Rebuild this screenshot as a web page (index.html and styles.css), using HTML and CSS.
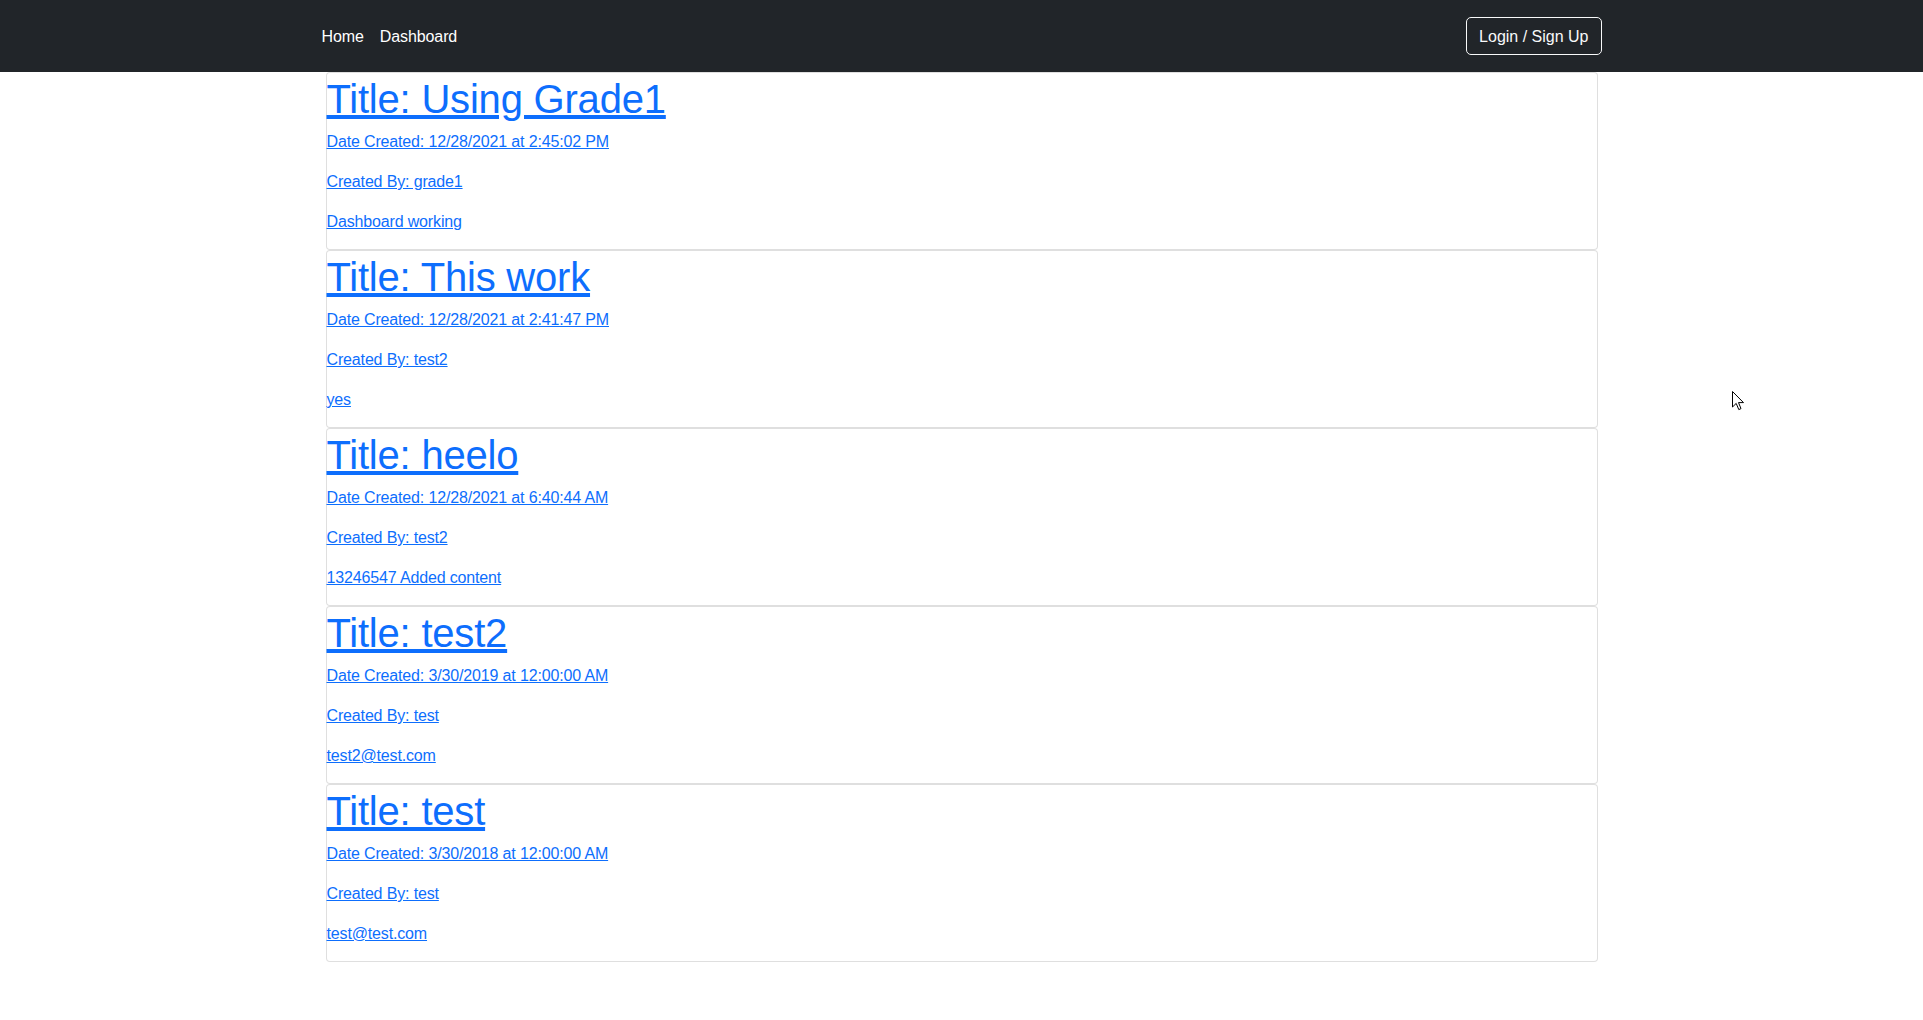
FILE: index.html
```html
<!DOCTYPE html>
<html lang="en">
<head>
<meta charset="utf-8">
<title>Blog</title>
<link rel="stylesheet" href="styles.css">
</head>
<body>
<nav class="navbar">
  <div class="nav-container">
    <ul class="nav-links">
      <li><a class="nav-link" href="#">Home</a></li>
      <li><a class="nav-link" href="#">Dashboard</a></li>
    </ul>
    <button class="btn-login" type="button">Login / Sign Up</button>
  </div>
</nav>
<main class="container">
  <div class="inner">
    <a class="post-card" href="#">
      <h1 class="post-title">Title: Using Grade1</h1>
      <p>Date Created: 12/28/2021 at 2:45:02 PM</p>
      <p>Created By: grade1</p>
      <p>Dashboard working</p>
    </a>
    <a class="post-card" href="#">
      <h1 class="post-title">Title: This work</h1>
      <p>Date Created: 12/28/2021 at 2:41:47 PM</p>
      <p>Created By: test2</p>
      <p>yes</p>
    </a>
    <a class="post-card" href="#">
      <h1 class="post-title">Title: heelo</h1>
      <p>Date Created: 12/28/2021 at 6:40:44 AM</p>
      <p>Created By: test2</p>
      <p>13246547 Added content</p>
    </a>
    <a class="post-card" href="#">
      <h1 class="post-title">Title: test2</h1>
      <p>Date Created: 3/30/2019 at 12:00:00 AM</p>
      <p>Created By: test</p>
      <p>test2@test.com</p>
    </a>
    <a class="post-card" href="#">
      <h1 class="post-title">Title: test</h1>
      <p>Date Created: 3/30/2018 at 12:00:00 AM</p>
      <p>Created By: test</p>
      <p>test@test.com</p>
    </a>
  </div>
</main>
<svg class="cursor" width="13" height="20" viewBox="0 0 13 20" aria-hidden="true">
  <path d="M0.5 0.5 L0.5 16 L4.2 12.4 L6.8 18.6 L9 17.6 L6.5 11.6 L11.5 11.6 Z" fill="#fff" stroke="#000" stroke-width="1" stroke-linejoin="miter"/>
</svg>
</body>
</html>
```

FILE: styles.css
```css
* {
  box-sizing: border-box;
}

html, body {
  margin: 0;
  padding: 0;
}

body {
  font-family: "Liberation Sans", Arial, sans-serif;
  font-size: 16px;
  line-height: 1.5;
  color: #212529;
  background: #fff;
  position: relative;
  min-height: 1020px;
}

.navbar {
  background: #212529;
  padding: 8px 0;
  height: 72px;
}

.nav-container {
  max-width: 1320px;
  margin: 0 auto;
  padding: 0 12px;
  height: 56px;
  display: flex;
  align-items: center;
  justify-content: space-between;
}

.nav-links {
  list-style: none;
  margin: 0;
  padding: 0;
  display: flex;
}

.nav-link {
  display: block;
  padding: 9px 8px 7px;
  color: #fff;
  text-decoration: none;
  letter-spacing: -0.1px;
}

.btn-login {
  font-family: inherit;
  font-size: 16px;
  line-height: 24px;
  padding: 7px 12px 5px;
  margin-right: 8px;
  color: #f8f9fa;
  background: transparent;
  border: 1px solid #f8f9fa;
  border-radius: 5px;
  cursor: pointer;
}

.container {
  max-width: 1320px;
  margin: 0 auto;
  padding: 0 12px;
}

.inner {
  padding: 0 12px;
}

.post-card {
  display: block;
  border: 1px solid rgba(0, 0, 0, 0.125);
  border-radius: 4px;
  color: #0d6efd;
  text-decoration: underline;
  background: #fff;
}

.post-title {
  margin: 0 0 6px;
  padding-top: 2px;
  font-size: 40px;
  line-height: 1.2;
  font-weight: 500;
  letter-spacing: -0.2px;
}

.post-card p {
  margin: 0 0 15px;
  padding-top: 1px;
  letter-spacing: -0.15px;
}

.cursor {
  position: absolute;
  left: 1732px;
  top: 391px;
}
```
